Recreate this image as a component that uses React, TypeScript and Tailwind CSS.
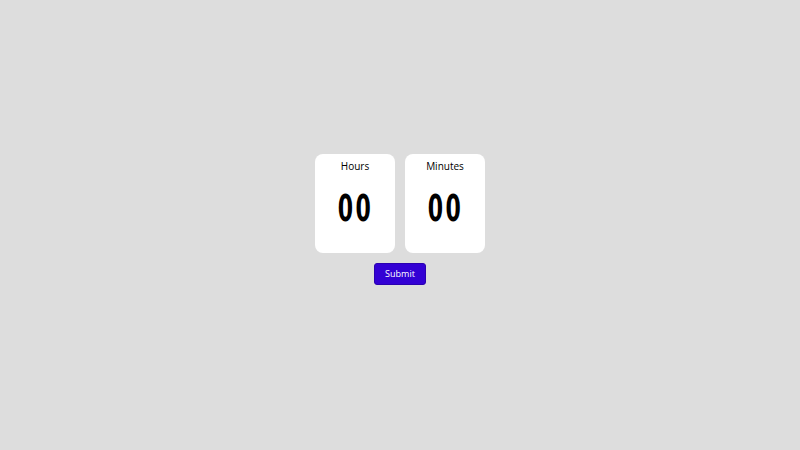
const TimeCard = ({ label, value }: { label: string; value: string }) => {
  return (
    <div className="flex h-[99px] w-[80px] flex-col items-center rounded-lg bg-white pt-[4px]">
      <span className="text-[10px] leading-4 text-black">{label}</span>
      <span className="mt-[10px] inline-block scale-x-[0.58] text-[38px] leading-[48px] font-bold tracking-[4px] text-black [font-family:'DejaVu_Sans',sans-serif]">
        {value}
      </span>
    </div>
  );
};

export default function App() {
  return (
    <div className="flex min-h-screen items-center justify-center bg-[#dddddd] pb-[11px] [font-family:'Open_Sans',sans-serif]">
      <div className="flex flex-col items-center gap-[10px]">
        <div className="flex gap-[10px]">
          <TimeCard label="Hours" value="00" />
          <TimeCard label="Minutes" value="00" />
        </div>
        <button
          type="button"
          className="h-[22px] w-[52px] rounded-[3px] border border-[#2a00b0] bg-[#3300d4] text-[9px] text-white"
        >
          Submit
        </button>
      </div>
    </div>
  );
}
